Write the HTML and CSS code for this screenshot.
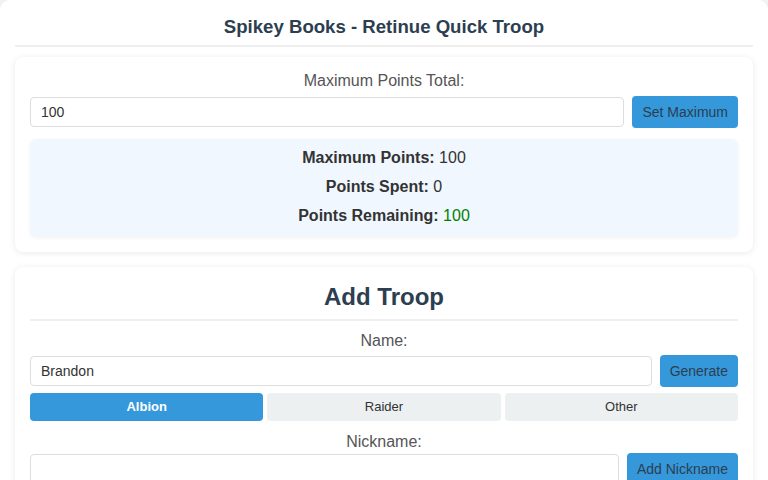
FILE: index.html
```html
<!DOCTYPE html>
<html lang="en">
<head>
<meta charset="utf-8">
<title>Spikey Books - Retinue Quick Troop</title>
<link rel="stylesheet" href="styles.css">
</head>
<body>
<div class="container">
  <h1 class="title">Spikey Books - Retinue Quick Troop</h1>

  <section class="card">
    <div class="label">Maximum Points Total:</div>
    <div class="row">
      <input class="field" type="text" value="100">
      <button class="btn">Set Maximum</button>
    </div>
    <div class="summary">
      <div class="line"><strong>Maximum Points:</strong> 100</div>
      <div class="line"><strong>Points Spent:</strong> 0</div>
      <div class="line"><strong>Points Remaining:</strong> <span class="ok">100</span></div>
    </div>
  </section>

  <section class="card">
    <h2 class="heading">Add Troop</h2>
    <div class="label label-first">Name:</div>
    <div class="row">
      <input class="field" type="text" value="Brandon">
      <button class="btn">Generate</button>
    </div>
    <div class="tabs">
      <button class="tab active">Albion</button>
      <button class="tab">Raider</button>
      <button class="tab">Other</button>
    </div>
    <div class="label label-gap">Nickname:</div>
    <div class="row">
      <input class="field" type="text" value="">
      <button class="btn">Add Nickname</button>
    </div>
  </section>
</div>
</body>
</html>
```

FILE: styles.css
```css
* { box-sizing: border-box; }

html, body {
  margin: 0;
  padding: 0;
  background: #f2f2f2;
}

body {
  font-family: "Liberation Sans", Arial, sans-serif;
  color: #333;
}

.container {
  background: #fff;
  border-radius: 10px;
  padding: 0 15px 20px;
  min-height: 480px;
}

.title {
  margin: 0 0 10px;
  padding: 16px 0 7px;
  font-size: 18.6px;
  line-height: 22px;
  font-weight: bold;
  color: #2c3e50;
  text-align: center;
  border-bottom: 2px solid #eee;
}

.card {
  background: #fff;
  border-radius: 8px;
  box-shadow: 0 1px 6px rgba(0, 0, 0, 0.09);
  padding: 15px;
  margin-bottom: 15px;
}

.label {
  text-align: center;
  font-size: 16px;
  line-height: 18px;
  color: #555;
  margin-bottom: 6px;
}

.label-first { margin-top: 11px; margin-bottom: 5px; }
.label-gap { margin-top: 12px; margin-bottom: 2px; }

.row {
  display: flex;
  align-items: center;
  gap: 8px;
}

.field {
  flex: 1;
  height: 30px;
  border: 1px solid #ddd;
  border-radius: 4px;
  padding: 0 10px;
  font-family: inherit;
  font-size: 14px;
  color: #333;
  background: #fff;
}

.btn {
  height: 32px;
  padding: 0 10px;
  border: none;
  border-radius: 4px;
  background: #3498db;
  color: #2c3e50;
  font-family: inherit;
  font-size: 14px;
}

.summary {
  margin-top: 11px;
  background: #f0f7ff;
  border-radius: 6px;
  box-shadow: 0 1px 4px rgba(0, 0, 0, 0.05);
  padding: 9px 15px 12px;
  text-align: center;
  font-size: 16px;
}

.line {
  line-height: 19px;
  margin-bottom: 10px;
}
.line:last-child { margin-bottom: 0; }

.line strong { color: #333; }

.ok { color: #008000; }

.heading {
  margin: 1px 0 0;
  padding-bottom: 8px;
  font-size: 24px;
  line-height: 27.6px;
  font-weight: bold;
  color: #2c3e50;
  text-align: center;
  border-bottom: 2px solid #eee;
}

.tabs {
  display: flex;
  gap: 4px;
  margin-top: 6px;
}

.tab {
  flex: 1;
  height: 28px;
  border: none;
  border-radius: 4px;
  background: #ecf0f1;
  color: #333;
  font-family: inherit;
  font-size: 13px;
}

.tab.active {
  background: #3498db;
  color: #fff;
  font-weight: bold;
}
```
